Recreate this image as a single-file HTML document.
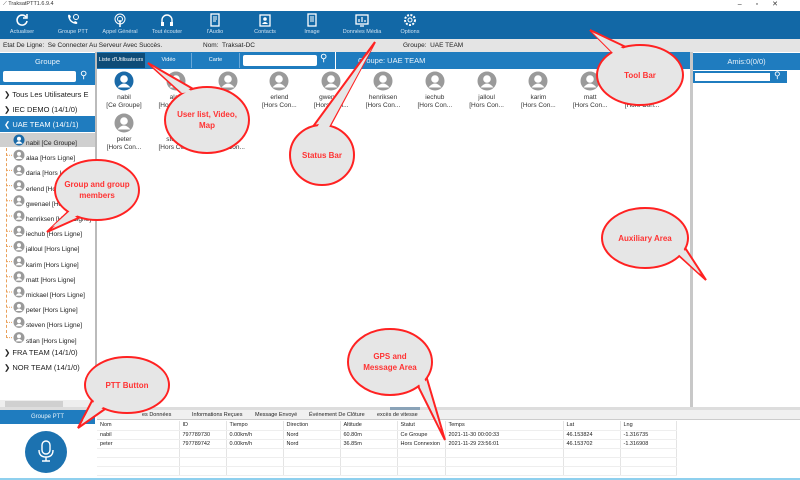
<!DOCTYPE html>
<html><head><meta charset="utf-8"><style>
*{margin:0;padding:0;box-sizing:border-box}
body{width:800px;height:480px;overflow:hidden;background:#fff;font-family:"Liberation Sans",sans-serif;position:relative;font-size:7px;color:#222}
.a{position:absolute}
.tb{left:0;top:11px;width:800px;height:28px;background:#1268a6}
.ti{position:absolute;top:2px;width:50px;text-align:center;color:#cfe2f2;font-size:5.5px}
.ti svg{display:block;margin:0 auto 2px}
.hd{background:#1f7cbf;color:#e8f2fa;text-align:center;font-size:7.5px;line-height:17px;height:17px}
.tr{position:absolute;left:4px;font-size:7.5px;white-space:nowrap}
.av{position:absolute;width:60px;text-align:center;font-size:6.5px;line-height:8px;color:#333}
.av svg{display:block;margin:0 auto 3px}
.th td{font-size:5.5px;height:9px;padding-left:3px;border-right:1px solid #e4e4e4;border-bottom:1px solid #eee;white-space:nowrap}
table{border-collapse:collapse}
</style></head><body>
<div class="a" style="left:3px;top:1px;font-size:5.5px;color:#333">⟋ TraksatPTT1.6.9.4</div>
<div class="a" style="right:8px;top:0;font-size:7px;color:#333;letter-spacing:14px">–▫✕</div>
<div class="a tb">
<div class="ti" style="left:-3px"><svg width="14" height="14" viewBox="0 0 14 14"><path d="M11 4A5 5 0 1 0 12 8" fill="none" stroke="#fff" stroke-width="1.6"/><path d="M12 1v4H8" fill="none" stroke="#fff" stroke-width="1.5"/></svg>Actualiser</div>
<div class="ti" style="left:48px"><svg width="14" height="14" viewBox="0 0 14 14"><path d="M2 3q0-2 2-1l1 2-1 1q1 3 4 4l1-1 2 1q1 2-1 2Q3 10 2 3z" fill="#fff"/><circle cx="10" cy="4" r="2.5" fill="none" stroke="#fff"/></svg>Groupe PTT</div>
<div class="ti" style="left:95px"><svg width="14" height="14" viewBox="0 0 14 14"><circle cx="7" cy="6" r="5" fill="none" stroke="#fff"/><circle cx="7" cy="6" r="2.5" fill="none" stroke="#fff"/><path d="M7 7v7" stroke="#fff" stroke-width="1.5"/></svg>Appel Général</div>
<div class="ti" style="left:142px"><svg width="14" height="14" viewBox="0 0 14 14"><path d="M2 10V7a5 5 0 0 1 10 0v3" fill="none" stroke="#fff" stroke-width="1.4"/><rect x="1" y="9" width="3" height="4" fill="#fff"/><rect x="10" y="9" width="3" height="4" fill="#fff"/></svg>Tout écouter</div>
<div class="ti" style="left:190px"><svg width="14" height="14" viewBox="0 0 14 14"><rect x="3" y="1" width="8" height="12" fill="none" stroke="#fff" stroke-width="1.3"/><path d="M5 4h4M5 6h4M5 8h3" stroke="#fff"/></svg>l'Audio</div>
<div class="ti" style="left:240px"><svg width="14" height="14" viewBox="0 0 14 14"><rect x="2" y="2" width="10" height="11" fill="none" stroke="#fff" stroke-width="1.3"/><circle cx="7" cy="6" r="1.8" fill="#fff"/><path d="M4 11q3-4 6 0" fill="#fff"/></svg>Contacts</div>
<div class="ti" style="left:287px"><svg width="14" height="14" viewBox="0 0 14 14"><rect x="3" y="1" width="8" height="12" fill="none" stroke="#fff" stroke-width="1.3"/><path d="M5 4h4M5 6h4M5 8h4" stroke="#fff"/></svg>Image</div>
<div class="ti" style="left:337px"><svg width="14" height="14" viewBox="0 0 14 14"><rect x="1" y="2" width="12" height="9" fill="none" stroke="#fff" stroke-width="1.3"/><path d="M4 9V6M7 9V4M10 9V7M5 13h4" stroke="#fff" stroke-width="1.2"/></svg>Données Média</div>
<div class="ti" style="left:385px"><svg width="14" height="14" viewBox="0 0 14 14"><circle cx="7" cy="7" r="5" fill="none" stroke="#fff" stroke-width="2" stroke-dasharray="2 1.4"/><circle cx="7" cy="7" r="2" fill="none" stroke="#fff"/></svg>Options</div>
</div>
<div class="a" style="left:0;top:39px;width:800px;height:13px;background:#e4e4e4;font-size:6.5px;line-height:13px">
<span class="a" style="left:3px">Etat De Ligne:&nbsp; Se Connecter Au Serveur Avec Succès.</span>
<span class="a" style="left:203px">Nom:&nbsp; Traksat-DC</span>
<span class="a" style="left:403px">Groupe:&nbsp; UAE TEAM</span>
</div>
<div class="a hd" style="left:0;top:53px;width:95px">Groupe</div>
<div class="a" style="left:95px;top:52px;width:2px;height:355px;background:#bbb"></div>
<div class="a" style="left:0;top:69px;width:95px;height:16px;background:#1f7cbf"></div>
<div class="a" style="left:3px;top:71px;width:73px;height:11px;background:#fff;border-radius:2px"></div>
<div class="a" style="left:80px;top:70px;color:#fff;font-size:10px">⚲</div>
<div class="a" style="left:0;top:116px;width:95px;height:16px;background:#1f7cbf"></div>
<div class="a" style="left:0;top:133px;width:95px;height:14px;background:#cfcfcf"></div>
<div class="tr" style="top:90px">❯ Tous Les Utilisateurs E</div>
<div class="tr" style="top:105px">❯ IEC DEMO (14/1/0)</div>
<div class="tr" style="top:120px;color:#fff">❮ UAE TEAM (14/1/1)</div>
<div class="a" style="left:6px;top:148px;width:1px;height:190px;border-left:1px dashed #e9a05a"></div>
<svg class="a" style="left:0;top:133px" width="26" height="210" id="ti"></svg>
<script>
var s="";for(var i=0;i<14;i++){var y=7+i*15.2;var c=i==0?"#1a6aa8":"#9a9a9a";
if(i>0)s+='<path d="M7 '+y+'h6" stroke="#e9a05a" stroke-dasharray="1 1"/>';
s+='<circle cx="19" cy="'+y+'" r="5.5" fill="'+c+'"/><circle cx="19" cy="'+(y-1.3)+'" r="2" fill="#fff"/><path d="M15.5 '+(y+3.8)+'q3.5-5 7 0" fill="#fff"/>';}
document.getElementById("ti").innerHTML=s;
</script>
<div style="position:absolute;left:26px;top:136px;font-size:6.5px;line-height:15.2px">
nabil [Ce Groupe]<br>alaa [Hors Ligne]<br>daria [Hors Ligne]<br>erlend [Hors Ligne]<br>gwenael [Hors Ligne]<br>henriksen [Hors Ligne]<br>iechub [Hors Ligne]<br>jalloul [Hors Ligne]<br>karim [Hors Ligne]<br>matt [Hors Ligne]<br>mickael [Hors Ligne]<br>peter [Hors Ligne]<br>steven [Hors Ligne]<br>stlan [Hors Ligne]</div>
<div class="tr" style="top:348px">❯ FRA TEAM (14/1/0)</div>
<div class="tr" style="top:363px">❯ NOR TEAM (14/1/0)</div>
<div class="a" style="left:0;top:400px;width:95px;height:8px;background:#eee"><div style="width:58px;height:6px;margin:1px 0 0 5px;background:#d0d0d0"></div></div>
<div class="a" style="left:97px;top:52px;width:595px;height:17px;background:#1f7cbf"></div>
<div class="a" style="left:97px;top:53px;width:48px;height:15px;background:#0d4c78;color:#fff;font-size:5.5px;line-height:15px;text-align:center">Liste d'Utilisateurs</div>
<div class="a" style="left:146px;top:53px;width:46px;line-height:15px;color:#fff;font-size:5.5px;text-align:center;border-right:1px solid #6aa8d8">Vidéo</div>
<div class="a" style="left:192px;top:53px;width:48px;line-height:15px;color:#fff;font-size:5.5px;text-align:center;border-right:1px solid #6aa8d8">Carte</div>
<div class="a" style="left:243px;top:55px;width:74px;height:11px;background:#fff;border-radius:2px"></div>
<div class="a" style="left:320px;top:53px;color:#fff;font-size:10px">⚲</div>
<div class="a" style="left:335px;top:52px;width:1px;height:17px;background:#fff"></div>
<div class="a" style="left:358px;top:53px;color:#e8f2fa;font-size:7.5px;line-height:15px">Groupe: UAE TEAM</div>
<div id="avs"></div>
<script>
var n=[["nabil","[Ce Groupe]",1],["alaa","[Hors Con..."],["daria","[Hors Con..."],["erlend","[Hors Con..."],["gwenael","[Hors Con..."],["henriksen","[Hors Con..."],["iechub","[Hors Con..."],["jalloul","[Hors Con..."],["karim","[Hors Con..."],["matt","[Hors Con..."],["mickael","[Hors Con..."],["peter","[Hors Con..."],["steven","[Hors Con..."],["stlan","[Hors Con..."]];
var h="";n.forEach(function(u,i){var c=i%11,r=Math.floor(i/11);var col=u[2]?"#1a6aa8":"#9a9a9a";
h+='<div class="av" style="left:'+(94+c*51.8)+'px;top:'+(71+r*42)+'px"><svg width="20" height="20" viewBox="0 0 20 20"><circle cx="10" cy="10" r="9.5" fill="'+col+'"/><circle cx="10" cy="8" r="3.8" fill="#fff"/><path d="M3.5 16.5q6.5-8 13 0" fill="#fff"/></svg>'+u[0]+'<br>'+u[1]+'</div>';});
document.getElementById("avs").innerHTML=h;
</script>
<div class="a" style="left:690px;top:52px;width:3px;height:355px;background:#c8c8c8"></div>
<div class="a hd" style="left:693px;top:53px;width:107px">Amis:0(0/0)</div>
<div class="a" style="left:693px;top:71px;width:94px;height:12px;background:#1f7cbf"></div>
<div class="a" style="left:695px;top:73px;width:75px;height:8px;background:#fff"></div>
<div class="a" style="left:774px;top:70px;color:#fff;font-size:9px">⚲</div>
<div class="a" style="left:0;top:407px;width:800px;height:3px;background:#ddd"></div>
<div class="a" style="left:390px;top:407px;width:30px;height:3px;background:#8aa3b8"></div>
<div class="a hd" style="left:0;top:410px;width:95px;height:14px;line-height:14px;font-size:6px">Groupe PTT</div>
<div class="a" style="left:25px;top:431px;width:42px;height:42px;border-radius:50%;background:#1c72b0"></div>
<svg class="a" style="left:36px;top:440px" width="20" height="24" viewBox="0 0 20 24"><rect x="6" y="1" width="8" height="13" rx="4" fill="none" stroke="#fff" stroke-width="1.4"/><path d="M3 10q0 7 7 7t7-7M10 17v4M6 21h8" fill="none" stroke="#fff" stroke-width="1.4"/></svg>
<div class="a" style="left:97px;top:410px;width:703px;height:10px;background:#f0f0f0;border-bottom:1px solid #ccc;font-size:5.5px;line-height:10px">
<span class="a" style="left:45px">es Données</span><span class="a" style="left:95px">Informations Reçues</span><span class="a" style="left:158px">Message Envoyé</span><span class="a" style="left:212px">Événement De Clôture</span><span class="a" style="left:280px">excès de vitesse</span></div>
<table class="a th" style="left:97px;top:421px;width:580px">
<tr><td style="width:82px">Nom</td><td style="width:47px">ID</td><td style="width:57px">Tiempo</td><td style="width:57px">Direction</td><td style="width:57px">Altitude</td><td style="width:48px">Statut</td><td style="width:118px">Temps</td><td style="width:57px">Lat</td><td>Lng</td></tr>
<tr><td>nabil</td><td>797789730</td><td>0.00km/h</td><td>Nord</td><td>60.80m</td><td>Ce Groupe</td><td>2021-11-30 00:00:33</td><td>46.153824</td><td>-1.316735</td></tr>
<tr><td>peter</td><td>797789742</td><td>0.00km/h</td><td>Nord</td><td>36.85m</td><td>Hors Connexion</td><td>2021-11-29 23:56:01</td><td>46.153702</td><td>-1.316908</td></tr>
<tr><td>&nbsp;</td><td></td><td></td><td></td><td></td><td></td><td></td><td></td><td></td></tr>
<tr><td>&nbsp;</td><td></td><td></td><td></td><td></td><td></td><td></td><td></td><td></td></tr>
<tr><td>&nbsp;</td><td></td><td></td><td></td><td></td><td></td><td></td><td></td><td></td></tr>
</table>
<div class="a" style="left:0;top:478px;width:800px;height:2px;background:#8fd0ee"></div>
<svg class="a" style="left:0;top:0" width="800" height="480">
<g stroke="#f22" stroke-width="2" fill="#e6e6e6" font-family="Liberation Sans" font-weight="bold" font-size="8">
<polygon points="615,55 590,30 628,48"/><ellipse cx="640" cy="75" rx="43" ry="30"/><polygon points="617,57 592,32 626,50" stroke="none"/>
<polygon points="180,92 148,63 195,90"/><ellipse cx="207" cy="120" rx="42" ry="33"/><polygon points="182,93 152,66 193,92" stroke="none"/>
<polygon points="312,128 375,42 330,126"/><ellipse cx="322" cy="155" rx="32" ry="30"/><polygon points="315,130 372,48 328,129" stroke="none"/>
<polygon points="70,210 47,232 85,215"/><ellipse cx="97" cy="190" rx="42" ry="30"/><polygon points="72,209 52,227 83,213" stroke="none"/>
<polygon points="675,252 706,280 680,240"/><ellipse cx="645" cy="238" rx="43" ry="30"/><polygon points="674,250 700,274 679,242" stroke="none"/>
<polygon points="415,380 445,440 425,372"/><ellipse cx="390" cy="362" rx="42" ry="33"/><polygon points="416,378 440,428 423,374" stroke="none"/>
<polygon points="95,395 78,428 115,402"/><ellipse cx="127" cy="385" rx="42" ry="28"/><polygon points="97,396 83,420 113,401" stroke="none"/>
<g fill="#f33" stroke="none" text-anchor="middle">
<text x="640" y="78">Tool Bar</text>
<text x="207" y="117">User list, Video,</text><text x="207" y="128">Map</text>
<text x="322" y="158">Status Bar</text>
<text x="97" y="187">Group and group</text><text x="97" y="198">members</text>
<text x="645" y="241">Auxiliary Area</text>
<text x="390" y="359">GPS and</text><text x="390" y="370">Message Area</text>
<text x="127" y="388">PTT Button</text>
</g></g></svg>
</body></html>
